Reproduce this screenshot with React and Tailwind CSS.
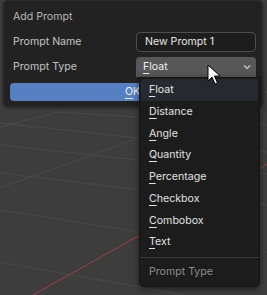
import React from "react";

const font = { fontFamily: 'Inter, "DejaVu Sans", "Liberation Sans", sans-serif' };

const items = ["Float", "Distance", "Angle", "Quantity", "Percentage", "Checkbox", "Combobox", "Text"];

const Accel = ({ label }) => (
    <span>
        <span className="underline decoration-1 underline-offset-[3px]">{label[0]}</span>
        {label.slice(1)}
    </span>
);

const Viewport = () => (
    <svg className="absolute inset-0" width="267" height="295" viewBox="0 0 267 295">
        <g stroke="#4a4a4a" strokeWidth="1" fill="none">
            <line x1="0" y1="127" x2="58" y2="112" />
            <line x1="57" y1="112" x2="267" y2="125" />
            <line x1="0" y1="123" x2="267" y2="152" />
            <line x1="0" y1="145" x2="267" y2="174" />
            <line x1="267" y1="92" x2="0" y2="188" />
            <line x1="0" y1="173" x2="267" y2="205" />
            <line x1="0" y1="210" x2="267" y2="252" />
            <line x1="0" y1="262" x2="267" y2="310" />
        </g>
        <line x1="33" y1="295" x2="267" y2="164" stroke="#8b3d4f" strokeWidth="1.2" />
    </svg>
);

const Cursor = () => (
    <svg className="absolute left-[207px] top-[64px]" width="14" height="22" viewBox="0 0 14 22">
        <path d="M1 1 L1 17 L5 13 L8 20 L10.5 19 L7.5 12 L13 12 Z" fill="#ffffff" stroke="#000000" strokeWidth="1" strokeLinejoin="round" />
    </svg>
);

export default function App() {
    return (
        <div className="relative w-[267px] h-[295px] overflow-hidden bg-[#3d3d3d] text-[10.6px]" style={font}>
            <Viewport />

            {/* Dialog */}
            <div className="absolute left-[3px] top-0 w-[260px] h-[107px] rounded-[5px] bg-[#222222] border border-[#2c2c2c] shadow-[0_1px_3px_rgba(0,0,0,0.5)] px-[6px] pt-[5px]">
                <div className="h-[22px] flex items-center pl-[3px] text-[#b8b8b8]">Add Prompt</div>
                <div className="mt-[4px] h-[20px] flex items-center justify-between">
                    <span className="pl-[3px] text-[#c2c2c2]">Prompt Name</span>
                    <div className="w-[120px] h-[20px] rounded-[4px] border border-[#4e4e4e] bg-[#1d1d1d] flex items-center pl-[8px] text-[#e6e6e6]">
                        New Prompt 1
                    </div>
                </div>
                <div className="mt-[5px] h-[20px] flex items-center justify-between">
                    <span className="pl-[3px] text-[#c2c2c2]">Prompt Type</span>
                    <div className="w-[120px] h-[20px] rounded-t-[4px] bg-[#575757] flex items-center justify-between pl-[7px] pr-[5px] text-[#ececec]">
                        <Accel label="Float" />
                        <svg width="8" height="6" viewBox="0 0 8 6">
                            <path d="M1 1.5 L4 4.5 L7 1.5" stroke="#d0d0d0" strokeWidth="1.2" fill="none" />
                        </svg>
                    </div>
                </div>
                <div className="mt-[6px] mr-[1px] h-[18px] rounded-[4px] bg-[#5680c2] flex items-center justify-center text-[#f0f0f0]">
                    <Accel label="OK" />
                </div>
            </div>

            {/* Dropdown menu */}
            <div className="absolute left-[139px] top-[77px] w-[121px] h-[210px] rounded-b-[5px] bg-[#1c1c1c] border border-[#151515] shadow-[0_2px_6px_rgba(0,0,0,0.5)] flex flex-col pt-[1px]">
                {items.map((item, i) => (
                    <div
                        key={item}
                        className={`h-[22px] mx-[1px] rounded-[3px] flex items-center pl-[8px] text-[#e2e2e2] ${i === 0 ? "bg-[#262a30]" : ""}`}
                    >
                        <Accel label={item} />
                    </div>
                ))}
                <div className="mt-[4px] h-px bg-[#3a3a3a]" />
                <div className="h-[28px] flex items-center pl-[9px] text-[#8c8c8c]">Prompt Type</div>
            </div>

            <Cursor />
        </div>
    );
}
